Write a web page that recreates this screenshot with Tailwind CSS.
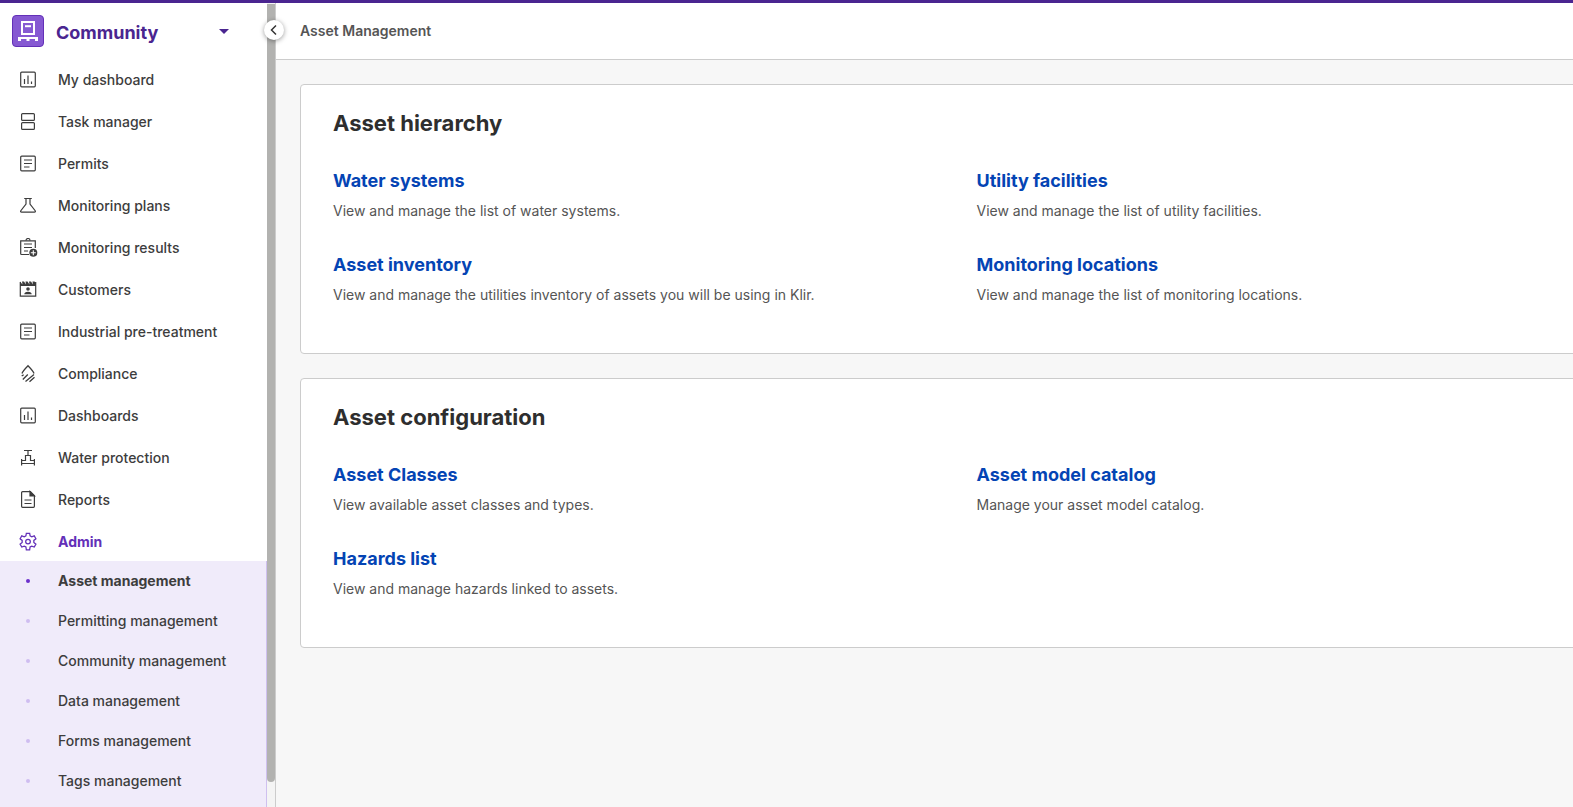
<!DOCTYPE html>
<html lang="en">
<head>
  <meta charset="UTF-8">
  <meta name="viewport" content="width=device-width, initial-scale=1.0">
  <script src="https://cdn.jsdelivr.net/npm/@tailwindcss/browser@4"></script>
  <title>Asset Management</title>
</head>
<body class="flex h-screen flex-col overflow-hidden border-t-3 border-[#4a2590] bg-[#f7f7f7] font-['Inter',sans-serif] text-sm text-[#3d3d3d]">
  <div class="flex min-h-0 flex-1">

    <!-- Sidebar -->
    <aside class="relative flex w-69 shrink-0 border-r border-[#cccccc] bg-white">
      <nav class="min-w-0 flex-1 overflow-hidden font-medium">
        <button class="flex h-[54px] w-full items-center gap-3 pt-[2px] pr-[38px] pl-3 text-left text-lg font-bold text-[#4a2590]">
          <svg class="size-8" viewBox="0 0 32 32" fill="none">
            <rect x=".5" y=".5" width="31" height="31" rx="3.5" fill="#8659d2" stroke="#6330b8" />
            <path d="M10 7h12v12H10z" stroke="#fff" stroke-width="2" />
            <path d="M13 11.200h6" stroke="#fff" stroke-width="2" />
            <path d="M6 22h20v4h-3v-2h-5.500v2h-3v-2H9v2H6z" fill="#fff" />
          </svg>
          <span class="flex-1 pt-1">Community</span>
          <svg class="h-[5px] w-2.5" viewBox="0 0 10 5"><path d="M0 0h10L5 5z" fill="currentColor" /></svg>
        </button>

        <ul>
          <li><a href="#" class="flex h-[42px] items-center gap-5 pt-1 pl-[18px]">
            <svg class="size-5" viewBox="0 0 20 20" fill="none" stroke="currentColor"><rect x="2.700" y="2.200" width="14.600" height="14.600" rx="1" stroke-width="1.200" /><path d="M6.500 9v5M10 5.500V14M13.500 11.500V14" stroke-width="1.200" /></svg>
            My dashboard</a></li>
          <li><a href="#" class="flex h-[42px] items-center gap-5 pt-1 pl-[18px]">
            <svg class="size-5" viewBox="0 0 20 20" fill="none" stroke="currentColor" stroke-width="1.200"><rect x="3.600" y="1.600" width="12.800" height="6.800" rx="1" /><rect x="3.600" y="10.600" width="12.800" height="6.800" rx="1" /></svg>
            Task manager</a></li>
          <li><a href="#" class="flex h-[42px] items-center gap-5 pt-1 pl-[18px]">
            <svg class="size-5" viewBox="0 0 20 20" fill="none" stroke="currentColor" stroke-width="1.200"><rect x="2.700" y="2.200" width="14.600" height="14.600" rx="1" /><path d="M6 6h8M6 9.500h8M6 13h5.500" /></svg>
            Permits</a></li>
          <li><a href="#" class="flex h-[42px] items-center gap-5 pt-1 pl-[18px]">
            <svg class="size-5" viewBox="0 0 20 20" fill="none" stroke="currentColor" stroke-width="1.200"><path d="M6.200 2.500h7.600M8 2.500V8l-5.200 6.700q-.7 1.500.8 1.500h12.800q1.500 0 .8-1.500L12 8V2.500" /></svg>
            Monitoring plans</a></li>
          <li><a href="#" class="flex h-[42px] items-center gap-5 pt-1 pl-[18px]">
            <svg class="size-5" viewBox="0 0 20 20" fill="none" stroke="currentColor" stroke-width="1.200"><path d="M11 16.500H3.500a.8.800 0 0 1-.8-.8V2.800h14.600V10M6 6h8M6 9.500h8M6 13h4" /><path d="M8 2.500a2 2 0 0 1 4 0" /><circle cx="15.300" cy="14.800" r="4" fill="currentColor" stroke="none" /><path d="M15.300 12.300v5M12.800 14.800h5" stroke="#fff" stroke-width="1.100" /></svg>
            Monitoring results</a></li>
          <li><a href="#" class="flex h-[42px] items-center gap-5 pt-1 pl-[18px]">
            <svg class="size-5" viewBox="0 0 20 20" fill="none" stroke="currentColor" stroke-width="1.200"><path d="M2.300 2v14.200h15.400V2" /><path d="M2 1.500 4.500 4.500 4 1.500h2l2 3-.5-3h2l2 3-.5-3h2l2 3-.5-3h2L18 3v3H2z" fill="currentColor" stroke="none" /><circle cx="10" cy="9" r="1.800" fill="currentColor" stroke="none" /><path d="M6.300 14.300q0-2.600 3.700-2.600t3.700 2.600z" fill="currentColor" stroke="none" /></svg>
            Customers</a></li>
          <li><a href="#" class="flex h-[42px] items-center gap-5 pt-1 pl-[18px]">
            <svg class="size-5" viewBox="0 0 20 20" fill="none" stroke="currentColor" stroke-width="1.200"><rect x="2.700" y="2.200" width="14.600" height="14.600" rx="1" /><path d="M6 6h8M6 9.500h8M6 13h5.500" /></svg>
            Industrial pre-treatment</a></li>
          <li><a href="#" class="flex h-[42px] items-center gap-5 pt-1 pl-[18px]">
            <svg class="size-5" viewBox="0 0 20 20" fill="none" stroke="currentColor" stroke-width="1.300"><path d="M4 9.500Q4.500 7.500 10 1.800q5.500 5.700 6 7.700M3.700 12l2-1.300M4.800 15.500l5-5M7.500 17.500l8.500-7M11.500 17.800l5-4.600" /></svg>
            Compliance</a></li>
          <li><a href="#" class="flex h-[42px] items-center gap-5 pt-1 pl-[18px]">
            <svg class="size-5" viewBox="0 0 20 20" fill="none" stroke="currentColor"><rect x="2.700" y="2.200" width="14.600" height="14.600" rx="1" stroke-width="1.200" /><path d="M6.500 9v5M10 5.500V14M13.500 11.500V14" stroke-width="1.200" /></svg>
            Dashboards</a></li>
          <li><a href="#" class="flex h-[42px] items-center gap-5 pt-1 pl-[18px]">
            <svg class="size-5" viewBox="0 0 20 20" fill="none" stroke="currentColor" stroke-width="1.200"><path d="M6 2.500h8M10 2.500V7M3.600 11v6.500M16.400 11v6.500M3.600 15.500h12.800M3.600 12.500h3.900V7.500h5v5h3.900" /></svg>
            Water protection</a></li>
          <li><a href="#" class="flex h-[42px] items-center gap-5 pt-1 pl-[18px]">
            <svg class="size-5" viewBox="0 0 20 20" fill="none" stroke="currentColor" stroke-width="1.200"><path d="M12.300 1.700H4.600a1 1 0 0 0-1 1v13.600a1 1 0 0 0 1 1h10.800a1 1 0 0 0 1-1V5.800zM6.500 10h7M6.500 13.500h7" /><path d="M12 1.500V6h4.500z" fill="currentColor" /></svg>
            Reports</a></li>
          <li>
            <a href="#" class="flex h-[42px] items-center gap-5 pt-1 pl-[18px] font-bold text-[#6330b8]">
              <svg class="size-5" viewBox="0 0 24 24" fill="none" stroke="currentColor" stroke-width="1.500"><path d="M10 1.500h4l.5 3.200 2 1.100 3-1.200 2 3.500-2.500 2v2.500l2.500 2-2 3.500-3-1.200-2 1.100L14 21.500h-4l-.5-3.500-2-1.100-3 1.200-2-3.500 2.500-2v-2.500l-2.500-2 2-3.500 3 1.200 2-1.100z" /><circle cx="12" cy="11.500" r="2.800" /></svg>
              Admin</a>
            <ul class="border-r border-[#cfc0ef] bg-[#f0ebfa]">
              <li><a href="#" aria-current="page" class="flex h-10 items-center gap-7 pl-[26px] font-bold"><span class="size-1 rounded-full bg-[#6c30cc]"></span>Asset management</a></li>
              <li><a href="#" class="flex h-10 items-center gap-7 pl-[26px]"><span class="size-1 rounded-full bg-[#cfbdf0]"></span>Permitting management</a></li>
              <li><a href="#" class="flex h-10 items-center gap-7 pl-[26px]"><span class="size-1 rounded-full bg-[#cfbdf0]"></span>Community management</a></li>
              <li><a href="#" class="flex h-10 items-center gap-7 pl-[26px]"><span class="size-1 rounded-full bg-[#cfbdf0]"></span>Data management</a></li>
              <li><a href="#" class="flex h-10 items-center gap-7 pl-[26px]"><span class="size-1 rounded-full bg-[#cfbdf0]"></span>Forms management</a></li>
              <li><a href="#" class="flex h-10 items-center gap-7 pl-[26px]"><span class="size-1 rounded-full bg-[#cfbdf0]"></span>Tags management</a></li>
              <li class="h-10"></li>
            </ul>
          </li>
        </ul>
      </nav>
      <div class="w-2 shrink-0 bg-[#f4f4f4] pt-px pb-[25px]"><div class="h-full rounded-b-full bg-[#b2b2b0]"></div></div>
      <button aria-label="Collapse sidebar" class="absolute top-[17px] -right-[9px] flex size-5 items-center justify-center rounded-full bg-white shadow-[0_1px_5px_rgba(0,0,0,0.4)]">
        <svg class="size-3" viewBox="0 0 12 12" fill="none" stroke="#333" stroke-width="1.500"><path d="M8 1.500 3.500 6 8 10.500" /></svg>
      </button>
    </aside>

    <!-- Content -->
    <div class="flex min-w-0 flex-1 flex-col overflow-hidden">
      <header class="flex h-[57px] shrink-0 items-center border-b border-[#cccccc] bg-white px-6">
        <h1 class="font-semibold text-[#555555]">Asset Management</h1>
      </header>
      <main class="-mr-12 flex flex-col gap-6 py-6 pl-6">
        <section class="rounded border border-[#cccccc] bg-white pt-6 pb-11 pl-8">
          <h2 class="text-[22px] leading-7 font-bold text-[#2e2e2e]">Asset hierarchy</h2>
          <div class="mt-7 grid grid-cols-2 gap-y-6">
            <div>
              <a href="#" class="text-lg leading-8 font-bold text-[#0444b4]">Water systems</a>
              <p class="leading-7 text-[#555555]">View and manage the list of water systems.</p>
            </div>
            <div>
              <a href="#" class="text-lg leading-8 font-bold text-[#0444b4]">Utility facilities</a>
              <p class="leading-7 text-[#555555]">View and manage the list of utility facilities.</p>
            </div>
            <div>
              <a href="#" class="text-lg leading-8 font-bold text-[#0444b4]">Asset inventory</a>
              <p class="leading-7 text-[#555555]">View and manage the utilities inventory of assets you will be using in Klir.</p>
            </div>
            <div>
              <a href="#" class="text-lg leading-8 font-bold text-[#0444b4]">Monitoring locations</a>
              <p class="leading-7 text-[#555555]">View and manage the list of monitoring locations.</p>
            </div>
          </div>
        </section>

        <section class="rounded border border-[#cccccc] bg-white pt-6 pb-11 pl-8">
          <h2 class="text-[22px] leading-7 font-bold text-[#2e2e2e]">Asset configuration</h2>
          <div class="mt-7 grid grid-cols-2 gap-y-6">
            <div>
              <a href="#" class="text-lg leading-8 font-bold text-[#0444b4]">Asset Classes</a>
              <p class="leading-7 text-[#555555]">View available asset classes and types.</p>
            </div>
            <div>
              <a href="#" class="text-lg leading-8 font-bold text-[#0444b4]">Asset model catalog</a>
              <p class="leading-7 text-[#555555]">Manage your asset model catalog.</p>
            </div>
            <div>
              <a href="#" class="text-lg leading-8 font-bold text-[#0444b4]">Hazards list</a>
              <p class="leading-7 text-[#555555]">View and manage hazards linked to assets.</p>
            </div>
          </div>
        </section>
      </main>
    </div>
  </div>
</body>
</html>
